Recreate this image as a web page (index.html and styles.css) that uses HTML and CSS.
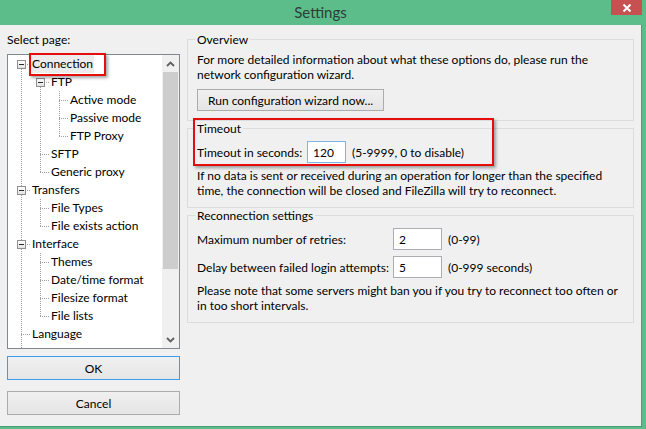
FILE: index.html
```html
<!DOCTYPE html>
<html>
<head>
<meta charset="utf-8">
<title>Settings</title>
<link rel="stylesheet" href="styles.css">
</head>
<body>
<div class="window">
  <div class="titlebar">
    <div class="title">Settings</div>
    <div class="close"><svg width="10" height="8" viewBox="0 0 10 8"><path d="M1.5 0.5 L8.5 7.5 M8.5 0.5 L1.5 7.5" stroke="#fff" stroke-width="2" fill="none"/></svg></div>
  </div>
  <div class="client">
    <div class="left">
      <div class="label">Select page:</div>
      <div class="treebox">
        <div class="tree">
          <div class="row sel"><span class="c first"><i class="exp"></i></span><span class="t">Connection</span></div>
          <div class="row"><span class="c pipe"></span><span class="c first"><i class="exp"></i></span><span class="t">FTP</span></div>
          <div class="row"><span class="c pipe"></span><span class="c pipe"></span><span class="c tee"></span><span class="t">Active mode</span></div>
          <div class="row"><span class="c pipe"></span><span class="c pipe"></span><span class="c tee"></span><span class="t">Passive mode</span></div>
          <div class="row"><span class="c pipe"></span><span class="c pipe"></span><span class="c elbow"></span><span class="t">FTP Proxy</span></div>
          <div class="row"><span class="c pipe"></span><span class="c tee"></span><span class="t">SFTP</span></div>
          <div class="row"><span class="c pipe"></span><span class="c elbow"></span><span class="t">Generic proxy</span></div>
          <div class="row"><span class="c tee"><i class="exp"></i></span><span class="t">Transfers</span></div>
          <div class="row"><span class="c pipe"></span><span class="c tee"></span><span class="t">File Types</span></div>
          <div class="row"><span class="c pipe"></span><span class="c elbow"></span><span class="t">File exists action</span></div>
          <div class="row"><span class="c tee"><i class="exp"></i></span><span class="t">Interface</span></div>
          <div class="row"><span class="c pipe"></span><span class="c tee"></span><span class="t">Themes</span></div>
          <div class="row"><span class="c pipe"></span><span class="c tee"></span><span class="t">Date/time format</span></div>
          <div class="row"><span class="c pipe"></span><span class="c tee"></span><span class="t">Filesize format</span></div>
          <div class="row"><span class="c pipe"></span><span class="c elbow"></span><span class="t">File lists</span></div>
          <div class="row"><span class="c tee"></span><span class="t">Language</span></div>
          <div class="tree-fill"></div>
        </div>
        <div class="scrollbar">
          <div class="arrow"><svg width="9" height="6" viewBox="0 0 9 6"><path d="M1 5 L4.5 1.5 L8 5" stroke="#606060" stroke-width="1.8" fill="none"/></svg></div>
          <div class="track"><div class="thumb"></div></div>
          <div class="arrow"><svg width="9" height="6" viewBox="0 0 9 6"><path d="M1 1 L4.5 4.5 L8 1" stroke="#606060" stroke-width="1.8" fill="none"/></svg></div>
        </div>
      </div>
      <button class="btn ok">OK</button>
      <button class="btn cancel">Cancel</button>
    </div>
    <div class="right">
      <fieldset class="group">
        <legend>Overview</legend>
        <p class="text first-text">For more detailed information about what these options do, please run the<br>network configuration wizard.</p>
        <button class="btn wizard">Run configuration wizard now...</button>
      </fieldset>
      <fieldset class="group">
        <legend>Timeout</legend>
        <div class="timeout-row">
          <span class="timeout-label">Timeout in seconds:</span>
          <input class="num focus" value="120">
          <span class="hint">(5-9999, 0 to disable)</span>
        </div>
        <p class="text">If no data is sent or received during an operation for longer than the specified<br>time, the connection will be closed and FileZilla will try to reconnect.</p>
      </fieldset>
      <fieldset class="group">
        <legend>Reconnection settings</legend>
        <div class="recon-grid">
          <span class="recon-label">Maximum number of retries:</span>
          <input class="num wide" value="2">
          <span class="hint">(0-99)</span>
          <span class="recon-label">Delay between failed login attempts:</span>
          <input class="num wide" value="5">
          <span class="hint">(0-999 seconds)</span>
        </div>
        <p class="text">Please note that some servers might ban you if you try to reconnect too often or<br>in too short intervals.</p>
      </fieldset>
    </div>
    <div class="mark mark-connection"></div>
    <div class="mark mark-timeout"></div>
  </div>
</div>
</body>
</html>
```
FILE: styles.css
```css
* { box-sizing: border-box; }
html, body { margin: 0; padding: 0; }
body {
  width: 646px;
  height: 429px;
  overflow: hidden;
  font-family: Lato, "Liberation Sans", sans-serif;
  font-size: 12px;
  line-height: 15px;
  color: #000;
}
.window {
  width: 646px;
  height: 429px;
  background: #5cbd8b;
  display: flex;
  flex-direction: column;
}
.titlebar {
  height: 25px;
  display: flex;
  align-items: flex-start;
  flex: none;
}
.title {
  flex: 1;
  padding-left: 30px;
  text-align: center;
  font-size: 15px;
  line-height: 24px;
  color: #2c3d34;
}
.close {
  width: 31px;
  height: 15px;
  margin-right: 4px;
  background: #c75050;
  display: flex;
  align-items: center;
  justify-content: center;
}
.client {
  position: relative;
  width: 642px;
  height: 402px;
  background: #f0f0f0;
  border-right: 1px solid #479f72;
  border-bottom: 1px solid #479f72;
  display: flex;
  gap: 7px;
  padding: 7px 0 0 7px;
}
.left { width: 173px; flex: none; display: flex; flex-direction: column; }
.label { height: 15px; white-space: nowrap; }
.treebox { margin-top: 7px; height: 295px; border: 1px solid #828790; background: #fff; display: flex; }
.tree { flex: 1; display: flex; flex-direction: column; padding-left: 4px; overflow: hidden; }
.row { height: 18px; display: flex; align-items: flex-start; flex: none; }
.c { width: 19px; height: 18px; flex: none; padding: 5px 0 0 5px; background-repeat: no-repeat; }
.pipe {
  background-image: repeating-linear-gradient(to bottom, #a0a0a0 0 1px, transparent 1px 2px);
  background-position: 9px 0;
  background-size: 1px 18px;
}
.tee {
  background-image:
    repeating-linear-gradient(to bottom, #a0a0a0 0 1px, transparent 1px 2px),
    repeating-linear-gradient(to right, #a0a0a0 0 1px, transparent 1px 2px);
  background-position: 9px 0, 9px 9px;
  background-size: 1px 18px, 10px 1px;
}
.elbow {
  background-image:
    repeating-linear-gradient(to bottom, #a0a0a0 0 1px, transparent 1px 2px),
    repeating-linear-gradient(to right, #a0a0a0 0 1px, transparent 1px 2px);
  background-position: 9px 0, 9px 9px;
  background-size: 1px 10px, 10px 1px;
}
.first {
  background-image:
    repeating-linear-gradient(to bottom, #a0a0a0 0 1px, transparent 1px 2px),
    repeating-linear-gradient(to right, #a0a0a0 0 1px, transparent 1px 2px);
  background-position: 9px 10px, 9px 9px;
  background-size: 1px 8px, 10px 1px;
}
.exp {
  display: block; width: 9px; height: 9px; border: 1px solid #8e8f8f;
  background:
    linear-gradient(#2a2a2a, #2a2a2a) center / 5px 1px no-repeat,
    linear-gradient(#ffffff, #e3e3e3);
}
.t { margin-left: 1px; line-height: 18px; white-space: nowrap; }
.sel .t { background: #ececec; padding: 0 1px; margin-left: 0; }
.tree-fill {
  flex: 1;
  background-image: repeating-linear-gradient(to bottom, #a0a0a0 0 1px, transparent 1px 2px);
  background-position: 9px 0; background-size: 1px 100%; background-repeat: no-repeat;
}
.scrollbar { width: 17px; flex: none; background: #f0f0f0; display: flex; flex-direction: column; }
.arrow { height: 17px; flex: none; display: flex; align-items: center; justify-content: center; }
.track { flex: 1; padding: 0 1px; }
.thumb { height: 197px; background: #cdcdcd; }
.btn {
  font: inherit; color: #000; height: 24px; padding: 0;
  border: 1px solid #acacac; background: linear-gradient(#f0f0f0, #e5e5e5); display: block;
}
.ok { margin-top: 7px; border-color: #3c9cf0; }
.cancel { margin-top: 11px; }
.right { width: 447px; flex: none; display: flex; flex-direction: column; }
.group { margin: 0; min-width: 0; border: 1px solid #dcdcdc; padding: 5px 9px 9px 9px; }
.group legend { padding: 0 2px; margin-left: -2px; line-height: 15px; white-space: nowrap; }
.text { margin: 5px 0 0 0; white-space: nowrap; }
.text.first-text { margin-top: 0; }
.wizard { margin-top: 7px; width: 187px; height: 22px; }
.timeout-row { display: flex; align-items: center; height: 22px; }
.timeout-label { width: 110px; flex: none; white-space: nowrap; }
.num {
  font: inherit; color: #000; height: 22px; padding: 0 0 0 5px;
  border: 1px solid #abadb3; background: #fff; outline: none; flex: none;
}
.num.focus { width: 39px; border-color: #7eb4ea; }
.num.wide { width: 49px; }
.hint { margin-left: 6px; white-space: nowrap; }
.recon-grid { display: grid; grid-template-columns: 196px 49px auto; row-gap: 6px; align-items: center; }
.mark { position: absolute; border: 2px solid #e60d0d; box-shadow: 2px 2px 3px rgba(0, 0, 0, 0.35); }
.mark-connection { left: 29px; top: 28px; width: 77px; height: 23px; }
.mark-timeout { left: 193px; top: 93px; width: 301px; height: 48px; }
```
